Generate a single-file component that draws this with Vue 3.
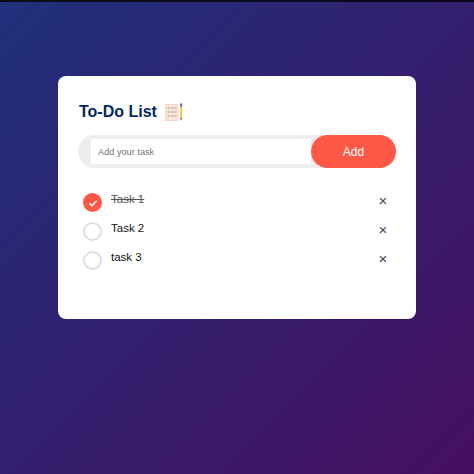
<script setup>
const tasks = [
  { id: 1, label: 'Task 1', done: true },
  { id: 2, label: 'Task 2', done: false },
  { id: 3, label: 'task 3', done: false },
]
</script>

<template>
  <div class="page">
    <div class="topline"></div>
    <main class="card">
      <h1 class="title">
        <span>To-Do List</span>
        <svg class="memo" viewBox="0 0 18 18" width="18" height="18" aria-hidden="true">
          <rect x="0.5" y="1.5" width="12.5" height="16" fill="#fbe3d6" stroke="#f5cfc0" stroke-width="0.8" />
          <path d="M2.6 5h1.6M2.6 9h1.6M2.6 13h1.6" stroke="#7fc078" stroke-width="1.3" />
          <path d="M5.5 5h6M5.5 9h6M5.5 13h6" stroke="#a6a99c" stroke-width="0.9" />
          <rect x="15" y="3" width="2.2" height="12" fill="#f2c650" />
          <rect x="15" y="0.5" width="2.2" height="3" fill="#4f78a8" />
          <path d="M15 15h2.2l-1.1 3z" fill="#7a6a58" />
        </svg>
      </h1>
      <div class="entry">
        <input class="field" type="text" placeholder="Add your task" />
        <button class="add" type="button">Add</button>
      </div>
      <ul class="list">
        <li v-for="t in tasks" :key="t.id" class="row">
          <span class="check" :class="{ on: t.done }">
            <svg v-if="t.done" viewBox="0 0 20 20" width="20" height="20" aria-hidden="true">
              <path d="M6.4 10.3l2.5 2.4 4.8-5" fill="none" stroke="#fff" stroke-width="1.5" />
            </svg>
          </span>
          <span class="label" :class="{ done: t.done }">{{ t.label }}</span>
          <span class="remove">×</span>
        </li>
      </ul>
    </main>
  </div>
</template>

<style>
html, body { margin: 0; padding: 0; }
</style>

<style scoped>
.page {
  width: 474px;
  height: 474px;
  box-sizing: border-box;
  background: linear-gradient(135deg, #1f307c, #470f60);
  font-family: "Liberation Sans", Arial, sans-serif;
  overflow: hidden;
}
.topline { height: 2px; background: #0b0b1c; }
.card {
  width: 358px;
  height: 243px;
  box-sizing: border-box;
  margin: 74px 0 0 58px;
  padding: 26px 20px 0 20px;
  background: #fff;
  border-radius: 8px;
}
.title {
  display: flex;
  align-items: center;
  gap: 8px;
  height: 20px;
  margin: 0 0 13px;
  padding-left: 1px;
  color: #002765;
  font-size: 16px;
  font-weight: 700;
  line-height: 20px;
}
.memo { flex: none; }
.entry {
  display: flex;
  align-items: center;
  height: 33px;
  padding-left: 13px;
  background: #edeef0;
  border-radius: 17px;
}
.field {
  flex: 1;
  min-width: 0;
  height: 25px;
  box-sizing: border-box;
  padding: 0 7px;
  border: 0;
  outline: 0;
  background: #fff;
  font-family: inherit;
  font-size: 9.2px;
}
.field::placeholder { color: #757575; opacity: 1; }
.add {
  flex: none;
  width: 85px;
  height: 33px;
  border: 0;
  border-radius: 17px;
  background: #ff5945;
  color: #fff;
  font-family: inherit;
  font-size: 12px;
}
.list {
  list-style: none;
  margin: 19px 0 0;
  padding: 0 0 0 5px;
}
.row {
  display: flex;
  align-items: center;
  height: 29px;
}
.check {
  flex: none;
  width: 19px;
  height: 19px;
  box-sizing: border-box;
  border: 2px solid #dfdfdf;
  border-radius: 50%;
  margin-top: 2px;
  display: flex;
  align-items: center;
  justify-content: center;
}
.check.on { background: #ff5945; border-color: #ff5945; }
.check svg { flex: none; }
.label {
  margin-left: 9px;
  margin-bottom: 5px;
  flex: 1;
  color: #111;
  font-size: 11.5px;
}
.label.done { color: #555; text-decoration: line-through; }
.remove {
  flex: none;
  width: 16px;
  margin-right: 5px;
  margin-bottom: 2px;
  text-align: center;
  color: #444;
  font-size: 15px;
  line-height: 16px;
}
</style>
